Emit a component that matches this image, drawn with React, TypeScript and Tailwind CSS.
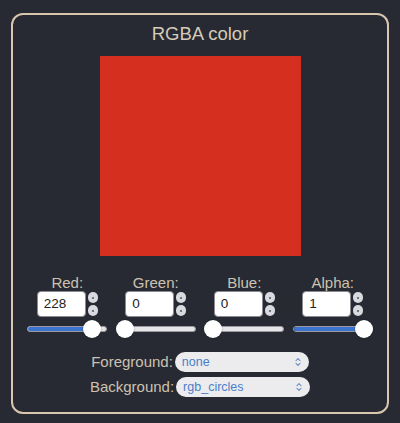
import { ChevronsUpDown } from "lucide-react";

const channels = [
  { label: "Red", value: "228", pct: 228 / 255 },
  { label: "Green", value: "0", pct: 0 },
  { label: "Blue", value: "0", pct: 0 },
  { label: "Alpha", value: "1", pct: 1 },
];

function Spinner() {
  return (
    <div className="flex flex-col gap-[2px]">
      <span className="w-[10px] h-[11px] rounded-full bg-[#d9dae0] flex items-center justify-center">
        <span className="w-[2px] h-[2px] rounded-full bg-[#555]" />
      </span>
      <span className="w-[10px] h-[11px] rounded-full bg-[#d9dae0] flex items-center justify-center">
        <span className="w-[2px] h-[2px] rounded-full bg-[#555]" />
      </span>
    </div>
  );
}

function Slider({ pct }: { pct: number }) {
  return (
    <div className="relative w-[80px] h-[18px] flex items-center">
      <div className="w-full h-[6px] rounded-full bg-[#e6e6e8] border border-[#9a9aa0] overflow-hidden">
        <div className="h-full bg-[#3a73d0]" style={{ width: `${pct * 100}%` }} />
      </div>
      <div
        className="absolute top-0 w-[18px] h-[18px] rounded-full bg-white shadow-[0_0_2px_rgba(0,0,0,0.4)]"
        style={{ left: `${pct * 62}px` }}
      />
    </div>
  );
}

function Channel({ label, value, pct }: { label: string; value: string; pct: number }) {
  return (
    <div className="flex flex-col items-center">
      <div className="text-[15px] leading-[17px] text-[#cdc2b0]">{label}:</div>
      <div className="flex items-center gap-[2px]">
        <div className="w-[49px] h-[26px] rounded-[4px] bg-white border border-[#8a8a90] pl-[6px] flex items-center text-[13.5px] text-[#222]">
          {value}
        </div>
        <Spinner />
      </div>
      <div className="mt-[3px]">
        <Slider pct={pct} />
      </div>
    </div>
  );
}

function SelectRow({ label, value }: { label: string; value: string }) {
  return (
    <div className="flex items-center justify-center gap-[2px]">
      <span className="text-[15px] leading-[20px] text-[#cdc2b0]">{label}:</span>
      <div className="w-[134px] h-[20px] rounded-full bg-[#ececef] flex items-center justify-between pl-[7px] pr-[6px]">
        <span className="text-[12.5px] text-[#4a7fc8]">{value}</span>
        <ChevronsUpDown size={10} strokeWidth={2.5} className="text-[#5a84c0]" />
      </div>
    </div>
  );
}

export default function App() {
  return (
    <div
      className="w-[400px] h-[423px] bg-[#272a33] pt-[13px] px-[11px]"
      style={{ fontFamily: '"Liberation Sans", Arial, sans-serif' }}
    >
      <div className="h-[401px] border-2 border-[#d8c7ae] rounded-[12px] pt-[7px] flex flex-col items-center">
        <h1 className="text-[18.5px] leading-[24px] text-[#d6cab8]">RGBA color</h1>
        <div className="mt-[10px] w-[201px] h-[200px] bg-[#d42f1f]" />
        <div className="mt-[18px] w-full px-[10px] grid grid-cols-4">
          {channels.map((c) => (
            <Channel key={c.label} {...c} />
          ))}
        </div>
        <div className="mt-[14px] flex flex-col gap-[5px]">
          <SelectRow label="Foreground" value="none" />
          <SelectRow label="Background" value="rgb_circles" />
        </div>
      </div>
    </div>
  );
}
